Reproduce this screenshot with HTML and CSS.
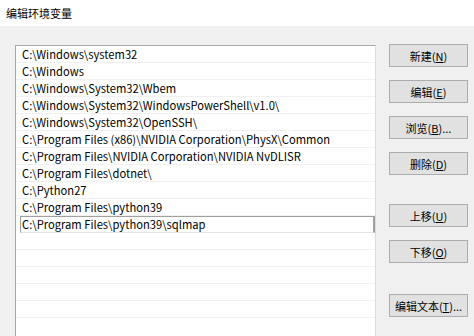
FILE: index.html
```html
<!DOCTYPE html>
<html lang="zh-CN">
<head>
    <meta charset="UTF-8">
    <title>编辑环境变量</title>
    <link rel="stylesheet" href="styles.css">
</head>
<body>
    <header class="titlebar">编辑环境变量</header>
    <main class="dialog">
        <div class="listbox">
            <div class="row">C:\Windows\system32</div>
            <div class="row">C:\Windows</div>
            <div class="row">C:\Windows\System32\Wbem</div>
            <div class="row">C:\Windows\System32\WindowsPowerShell\v1.0\</div>
            <div class="row">C:\Windows\System32\OpenSSH\</div>
            <div class="row">C:\Program Files (x86)\NVIDIA Corporation\PhysX\Common</div>
            <div class="row">C:\Program Files\NVIDIA Corporation\NVIDIA NvDLISR</div>
            <div class="row">C:\Program Files\dotnet\</div>
            <div class="row">C:\Python27</div>
            <div class="row">C:\Program Files\python39</div>
            <div class="row focused">C:\Program Files\python39\sqlmap</div>
            <div class="row"></div>
            <div class="row"></div>
            <div class="row"></div>
            <div class="row"></div>
            <div class="row"></div>
        </div>
        <div class="buttons">
            <button>新建(<u>N</u>)</button>
            <button>编辑(<u>E</u>)</button>
            <button>浏览(<u>B</u>)...</button>
            <button>删除(<u>D</u>)</button>
            <button class="gap">上移(<u>U</u>)</button>
            <button>下移(<u>O</u>)</button>
            <button class="gap-lg">编辑文本(<u>T</u>)...</button>
        </div>
    </main>
</body>
</html>
```

FILE: styles.css
```css
body {
    margin: 0;
    padding: 0;
    background: #f0f0f0;
    color: #000;
    font-family: "Noto Sans CJK SC", "Noto Sans", sans-serif;
    font-size: 12px;
    height: 336px;
    overflow: hidden;
}
.titlebar {
    background: #fff;
    height: 26px;
    line-height: 26px;
    padding-left: 6px;
    font-size: 11px;
    color: #000;
}
.dialog {
    display: flex;
    align-items: flex-start;
    padding: 19px 0 0 15px;
}
.listbox {
    width: 359px;
    height: 300px;
    background: #fff;
    border: 1px solid #a8a8a8;
    border-right-color: #dcdcdc;
    font-size: 11.2px;
}
.row {
    height: 16px;
    line-height: 16px;
    border-bottom: 1px solid #f0f0f0;
    padding-left: 6px;
    white-space: nowrap;
}
.row.focused {
    margin: 0 0 0 4px;
    padding-left: 1px;
    height: 15px;
    line-height: 15px;
    border: 1px solid #a0a0a0;
    border-right: 2px solid #a0a0a0;
    border-bottom-color: #e4e4e4;
}
.buttons {
    display: flex;
    flex-direction: column;
    gap: 13px;
    margin-left: 13px;
    margin-top: -1px;
}
button {
    width: 79px;
    height: 23px;
    padding: 0;
    background: #e1e1e1;
    border: 1px solid #adadad;
    font-family: inherit;
    font-size: 11px;
    color: #000;
}
button.gap {
    margin-top: 16px;
}
button.gap-lg {
    margin-top: 18px;
}
```
